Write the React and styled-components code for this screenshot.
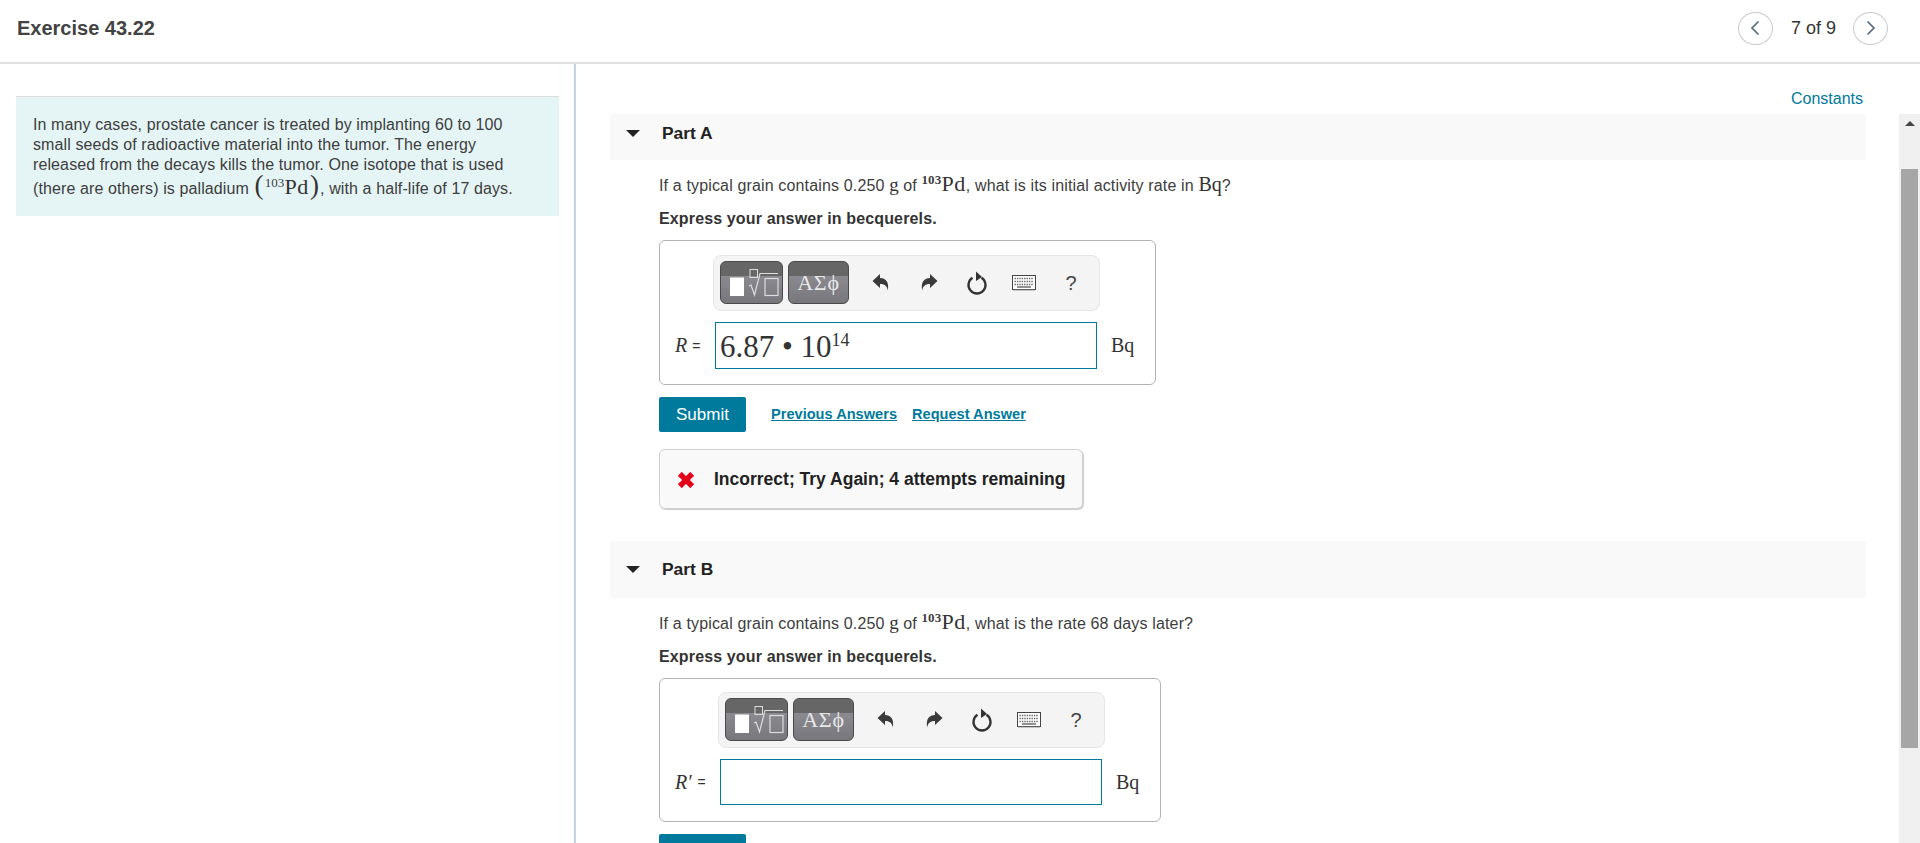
import React from "react";
import styled, { createGlobalStyle } from "styled-components";

const Global = createGlobalStyle`
  html, body { margin: 0; padding: 0; height: 100%; overflow: hidden; background: #fff; }
  body { font-family: "Liberation Sans", Arial, sans-serif; color: #333; }
  #root { height: 100%; }
  * { box-sizing: border-box; }
`;

const Page = styled.div`
  height: 843px; display: flex; flex-direction: column; overflow: hidden;
`;
const Header = styled.header`
  height: 64px; flex: none; display: flex; align-items: center; justify-content: space-between;
  padding: 0 32px 0 17px; border-bottom: 2px solid #e0e0e0;
`;
const Title = styled.h1`
  margin: 0 0 6px; font-size: 20px; font-weight: 700; color: #434343; line-height: 24px;
`;
const Pager = styled.div`
  display: flex; align-items: center; gap: 17px; margin-bottom: 6px; font-size: 18px; color: #333;
`;
const PagerText = styled.span`
  margin-left: 1px;
`;
const PagerButton = styled.span`
  width: 35px; height: 33px; border: 1px solid #c8c8c8; border-radius: 50%;
  display: flex; align-items: center; justify-content: center;
`;
const Body = styled.div`
  flex: 1; display: flex; min-height: 0;
`;
const LeftPane = styled.aside`
  width: 576px; flex: none; padding: 32px 0 0 16px; border-right: 2px solid #c6d4e6;
`;
const Intro = styled.div`
  height: 120px; width: 543px; padding: 18px 17px 0; background: #e5f5f6; border-top: 1px solid #dcdcdc;
  font-size: 16px; line-height: 20px; color: #3d3d3d; white-space: nowrap; letter-spacing: 0.11px;
`;
const LastLine = styled.div`
  height: 28px; line-height: 24px;
`;
const Paren = styled.span`
  font-family: "Liberation Serif", serif; font-size: 27px; color: #333; line-height: 20px;
  margin: 0 1px;
`;
const Serif = styled.span`
  font-family: "Liberation Serif", serif; font-size: ${p => p.$size || 20}px; color: #333;
  letter-spacing: ${p => p.$track || 0}px; line-height: 20px;
`;
const Sup = styled.sup`
  font-family: "Liberation Serif", serif; font-size: ${p => p.$size || 12}px; font-weight: ${p => p.$bold ? 700 : 400};
  line-height: 0; vertical-align: ${p => p.$up || 6}px; color: inherit;
`;
const Main = styled.main`
  flex: 1; min-width: 0; padding: 0 0 0 34px; overflow: hidden;
`;
const Constants = styled.div`
  height: 50px; padding: 25px 3px 0 0; text-align: right; width: 1256px;
  font-size: 16px; line-height: 20px; color: #007a9c;
`;
const PartHeader = styled.div`
  width: 1256px; height: ${p => p.$h}px; background: #f9f9f9; display: flex; align-items: center;
  padding-bottom: ${p => p.$pb}px; gap: 22px; padding-left: 16px;
  font-size: 17.4px; font-weight: 700; color: #222;
`;
const Caret = styled.span`
  width: 0; height: 0; border-left: 7px solid transparent; border-right: 7px solid transparent;
  border-top: 7px solid #222;
`;
const PartBody = styled.section`
  padding: ${p => p.$pt}px 0 0 49px;
`;
const Question = styled.p`
  margin: 0; font-size: 16px; line-height: 24px; color: #3d3d3d; white-space: nowrap; letter-spacing: 0.15px;
`;
const Instruction = styled.p`
  margin: ${p => p.$mt}px 0 0; font-size: 16px; font-weight: 700; line-height: 20px; color: #333; letter-spacing: 0.14px;
`;
const AnswerBox = styled.div`
  width: ${p => p.$w}px; height: ${p => p.$h}px; margin-top: ${p => p.$mt}px; border: 1px solid #b4b4b4; border-radius: 6px;
  padding: ${p => p.$pt}px 0 0 ${p => p.$pl}px;
`;
const Toolbar = styled.div`
  width: 387px; height: 56px; background: #f4f4f4; border: 1px solid #e6e6e6; border-radius: 8px;
  display: flex; align-items: flex-start; padding: 5px 0 0 6px; gap: 5px;
`;
const ToolButton = styled.span`
  width: ${p => p.$w}px; height: 43px; border: 1px solid #4a4a4a; border-radius: 6px;
  background: linear-gradient(#666 0, #666 33%, #8a8a90 33%, #77777c 100%);
  display: flex; align-items: center; justify-content: center; flex: none;
  font-family: "Liberation Serif", serif; font-size: 22px; color: #e8e8e8; letter-spacing: 0.8px;
`;
const ToolIcons = styled.div`
  display: flex; align-items: center; height: 44px; margin-left: 16px;
`;
const ToolIcon = styled.span`
  width: ${p => p.$w}px; margin-left: ${p => p.$ml || 0}px; display: flex; align-items: center; justify-content: center; flex: none;
  font-size: 20px; color: #444;
`;
const InputRow = styled.div`
  display: flex; align-items: center; margin-top: ${p => p.$mt}px; margin-left: ${p => p.$ml}px;
`;
const Label = styled.span`
  width: ${p => p.$w}px; flex: none; font-size: 14px; color: #333; white-space: nowrap; display: flex; gap: ${p => p.$gap}px; align-items: center;
`;
const ItalicSerif = styled.i`
  font-family: "Liberation Serif", serif; font-size: 20px; color: #333;
`;
const Field = styled.div`
  width: 382px; height: ${p => p.$h}px; flex: none; border: 1px solid #007a9c; padding: 0 4px;
  font-family: "Liberation Serif", serif; font-size: 31px; line-height: 47px; color: #333; white-space: pre;
`;
const Unit = styled.span`
  margin-left: 14px; font-family: "Liberation Serif", serif; font-size: 20px; color: #333;
`;
const Actions = styled.div`
  display: flex; align-items: center; margin-top: ${p => p.$mt}px; gap: 15px;
`;
const Submit = styled.span`
  width: 87px; height: 35px; background: #007a9c; color: #fff; border-radius: 2px; display: flex;
  align-items: center; justify-content: center; font-size: 17px; margin-right: 10px; flex: none;
`;
const ActionLink = styled.a`
  font-size: 14.6px; font-weight: 700; color: #007a9c; text-decoration: underline; margin-top: -1px;
`;
const Feedback = styled.div`
  width: 424px; height: 60px; margin-top: 17px; background: #f9f9f9; border: 1px solid #d0d0d0; border-radius: 6px;
  box-shadow: 1px 1px 1px #ccc; display: flex; align-items: center; gap: 19px; padding: 1px 0 0 17px;
  font-size: 17.5px; font-weight: 700; color: #222; white-space: nowrap;
`;
const Spacer = styled.div`
  height: ${p => p.$h}px;
`;
const Scrollbar = styled.div`
  width: 21px; flex: none; margin-top: 50px; background: #f0f0f0; display: flex; flex-direction: column; align-items: center;
`;
const ScrollArrow = styled.span`
  margin-top: 7px; width: 0; height: 0; border-left: 5px solid transparent; border-right: 5px solid transparent;
  border-bottom: 5px solid #444;
`;
const Thumb = styled.span`
  margin-top: 43px; width: 17px; height: 579px; background: #a6a6a6;
`;

const Chevron = ({ dir }) => (
  <svg width="12" height="18" viewBox="0 0 12 18" fill="none">
    <path d={dir === "left" ? "M9.5 2.5 L3 9 L9.5 15.5" : "M2.5 2.5 L9 9 L2.5 15.5"} stroke="#5a6b80" strokeWidth="1.7" />
  </svg>
);

const TemplateIcon = () => (
  <svg width="54" height="36" viewBox="0 0 54 36" fill="none">
    <rect x="5" y="12.5" width="14" height="18.5" fill="#fff" />
    <rect x="25" y="4.5" width="7.5" height="8" stroke="#ddd" fill="none" />
    <path d="M24 21 L26 20 L29.5 30 L35 8.5 L53 8.5" stroke="#ddd" strokeWidth="1.2" />
    <rect x="40" y="13.5" width="13" height="17" stroke="#ddd" fill="none" strokeWidth="1.2" />
  </svg>
);

const Undo = () => (
  <svg width="18" height="20" viewBox="0 0 18 20">
    <path d="M0.5 8 L8 1 L8 5 C13.5 5 17.5 9 15.8 17.5 C15.2 13 12.5 10.8 8 11 L8 15 Z" fill="#3a3a3a" />
  </svg>
);
const Redo = () => (
  <svg width="18" height="20" viewBox="0 0 18 20">
    <path d="M17.5 8 L10 1 L10 5 C4.5 5 0.5 9 2.2 17.5 C2.8 13 5.5 10.8 10 11 L10 15 Z" fill="#3a3a3a" />
  </svg>
);
const Reset = () => (
  <svg width="22" height="24" viewBox="0 0 22 24" fill="none">
    <path d="M6.5 6.8 A8.5 8.5 0 1 0 15.5 6.8" stroke="#333" strokeWidth="2.3" />
    <path d="M10 0.5 L16 6 L10 10 Z" fill="#333" />
  </svg>
);
const Keyboard = () => (
  <svg width="24" height="16" viewBox="0 0 24 16" fill="none">
    <rect x="0.5" y="0.5" width="23" height="14" fill="#fff" stroke="#444" />
    <path d="M2.5 3.5 H21.5" stroke="#666" strokeWidth="1.3" strokeDasharray="1.4 1" />
    <path d="M2.5 6.5 H21.5" stroke="#666" strokeWidth="1.3" strokeDasharray="1.4 1" />
    <path d="M2.5 9.5 H21.5" stroke="#666" strokeWidth="1.3" strokeDasharray="1.4 1" />
    <path d="M5 12 H19" stroke="#555" strokeWidth="1.3" />
    <path d="M1 15.3 H23" stroke="#bbb" />
  </svg>
);
const CrossIcon = () => (
  <svg width="18" height="18" viewBox="0 0 17 17" style={{ flex: "none" }}>
    <path d="M1.5 4.5 L4.5 1.5 L8.5 5.5 L12.5 1.5 L15.5 4.5 L11.5 8.5 L15.5 12.5 L12.5 15.5 L8.5 11.5 L4.5 15.5 L1.5 12.5 L5.5 8.5 Z" fill="#e2001a" stroke="#e2001a" strokeLinejoin="round" />
  </svg>
);

const Tools = () => (
  <Toolbar>
    <ToolButton $w={63}><TemplateIcon /></ToolButton>
    <ToolButton $w={61}>ΑΣϕ</ToolButton>
    <ToolIcons>
      <ToolIcon $w={22}><Undo /></ToolIcon>
      <ToolIcon $w={22} $ml={26}><Redo /></ToolIcon>
      <ToolIcon $w={22} $ml={26}><Reset /></ToolIcon>
      <ToolIcon $w={26} $ml={23}><Keyboard /></ToolIcon>
      <ToolIcon $w={16} $ml={26}>?</ToolIcon>
    </ToolIcons>
  </Toolbar>
);

const Pd = () => <Serif $size={22} $track={0.6}>Pd</Serif>;

export default function App() {
  return (
    <Page>
      <Global />
      <Header>
        <Title>Exercise 43.22</Title>
        <Pager>
          <PagerButton><Chevron dir="left" /></PagerButton>
          <PagerText>7 of 9</PagerText>
          <PagerButton><Chevron dir="right" /></PagerButton>
        </Pager>
      </Header>
      <Body>
        <LeftPane>
          <Intro>
            In many cases, prostate cancer is treated by implanting 60 to 100<br />
            small seeds of radioactive material into the tumor. The energy<br />
            released from the decays kills the tumor. One isotope that is used<br />
            <LastLine>
              (there are others) is palladium{" "}
              <Paren>(</Paren><Sup $size={13} $up={7}>103</Sup><Pd /><Paren>)</Paren>, with a half-life of 17 days.
            </LastLine>
          </Intro>
        </LeftPane>
        <Main>
          <Constants>Constants</Constants>
          <PartHeader $h={46} $pb={8}><Caret /><span>Part A</span></PartHeader>
          <PartBody $pt={14}>
            <Question>
              If a typical grain contains 0.250 <Serif $size={19}>g</Serif> of <Sup $size={13} $bold $up={7}>103</Sup><Pd />, what is its initial activity rate in <Serif>Bq</Serif>?
            </Question>
            <Instruction $mt={11}>Express your answer in becquerels.</Instruction>
            <AnswerBox $w={497} $h={145} $mt={11} $pt={14} $pl={53}>
              <Tools />
              <InputRow $ml={-38} $mt={11}>
                <Label $w={40} $gap={5}><ItalicSerif>R</ItalicSerif> =</Label>
                <Field $h={47}>6.87 • 10<Sup $size={18} $up={11}>14</Sup></Field>
                <Unit>Bq</Unit>
              </InputRow>
            </AnswerBox>
            <Actions $mt={12}>
              <Submit>Submit</Submit>
              <ActionLink>Previous Answers</ActionLink>
              <ActionLink>Request Answer</ActionLink>
            </Actions>
            <Feedback><CrossIcon /><span>Incorrect; Try Again; 4 attempts remaining</span></Feedback>
          </PartBody>
          <Spacer $h={32} />
          <PartHeader $h={57} $pb={0}><Caret /><span>Part B</span></PartHeader>
          <PartBody $pt={14}>
            <Question>
              If a typical grain contains 0.250 <Serif $size={19}>g</Serif> of <Sup $size={13} $bold $up={7}>103</Sup><Pd />, what is the rate 68 days later?
            </Question>
            <Instruction $mt={11}>Express your answer in becquerels.</Instruction>
            <AnswerBox $w={502} $h={144} $mt={11} $pt={13} $pl={58}>
              <Tools />
              <InputRow $ml={-43} $mt={11}>
                <Label $w={45} $gap={6}><ItalicSerif>R′</ItalicSerif> =</Label>
                <Field $h={46} />
                <Unit>Bq</Unit>
              </InputRow>
            </AnswerBox>
            <Actions $mt={12}>
              <Submit />
            </Actions>
          </PartBody>
        </Main>
        <Scrollbar>
          <ScrollArrow />
          <Thumb />
        </Scrollbar>
      </Body>
    </Page>
  );
}
